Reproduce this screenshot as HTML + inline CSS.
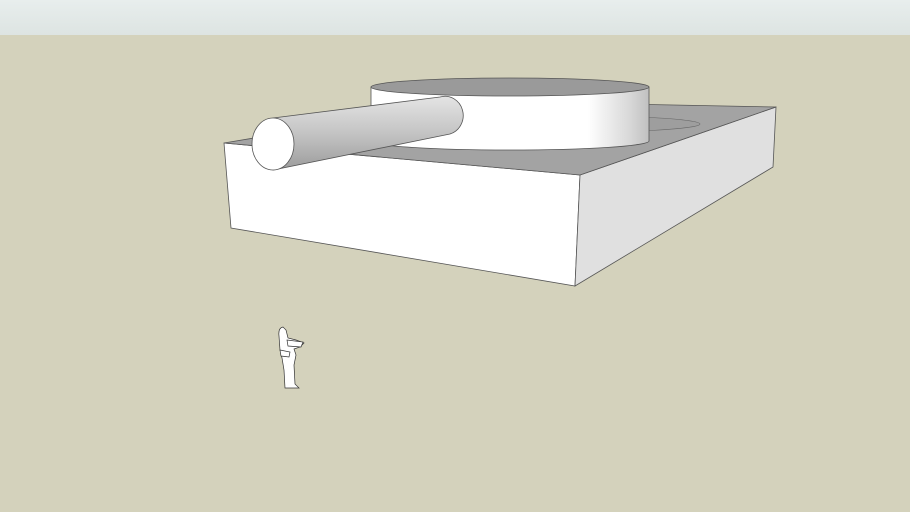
<!DOCTYPE html>
<html><head><style>
html,body{margin:0;padding:0;width:910px;height:512px;overflow:hidden;background:#d4d2bc}
</style></head><body>
<svg width="910" height="512" viewBox="0 0 910 512" xmlns="http://www.w3.org/2000/svg">
<defs>
<linearGradient id="sky" x1="0" y1="0" x2="0" y2="1"><stop offset="0" stop-color="#e8eeed"/><stop offset="1" stop-color="#dde4e2"/></linearGradient>
<linearGradient id="tube" x1="0" y1="0" x2="0" y2="1"><stop offset="0" stop-color="#e4e4e4"/><stop offset="0.5" stop-color="#c4c4c4"/><stop offset="1" stop-color="#9c9c9c"/></linearGradient>
<linearGradient id="disc" x1="0" y1="0" x2="1" y2="0"><stop offset="0" stop-color="#fff"/><stop offset="0.78" stop-color="#fff"/><stop offset="0.93" stop-color="#d8d8d8"/><stop offset="1" stop-color="#c0c0c0"/></linearGradient>
</defs>
<rect x="0" y="0" width="910" height="35" fill="url(#sky)"/>
<rect x="0" y="35" width="910" height="477" fill="#d4d2bc"/>
<!-- box -->
<polygon points="224,143 580,175 575,286 231,228" fill="#fff" stroke="#555" stroke-width="0.8"/>
<polygon points="580,175 776,107 773,167 575,286" fill="#e0e0e0" stroke="#555" stroke-width="0.8"/>
<polygon points="224,143 260,137 420,100 776,107 580,175" fill="#a3a3a3" stroke="#555" stroke-width="0.8"/>
<ellipse cx="540" cy="124" rx="160" ry="9" fill="#9e9e9e" stroke="#666" stroke-width="0.6"/>
<!-- disc -->
<path d="M371,87 L371,141 A139,9 0 0 0 649,141 L649,87 Z" fill="url(#disc)" stroke="#555" stroke-width="0.8"/>
<ellipse cx="510" cy="87" rx="139" ry="9" fill="#9a9a9a" stroke="#555" stroke-width="0.8"/>
<!-- tube -->
<path d="M273,118 L440,97 A18,19 0 0 1 450,134 L273,170 Z" fill="url(#tube)" stroke="#555" stroke-width="0.8"/>
<ellipse cx="273" cy="144" rx="21" ry="26" fill="#fff" stroke="#555" stroke-width="0.8"/>
<!-- person -->
<g fill="#fff" stroke="#333" stroke-width="0.7">
<path d="M283,327 Q278,328 279,336 L280,350 L282,358 L284,370 L285,388 L299,388 L295,384 L294,365 L296,355 L294,349 L300,347 L304,343 L296,340 L288,338 L286,330 Z"/>
<path d="M287,340 L303,342 L301,347 L288,346 Z"/>
<path d="M280,350 L290,352 L289,357 L281,356 Z"/>
</g>
</svg>
</body></html>
